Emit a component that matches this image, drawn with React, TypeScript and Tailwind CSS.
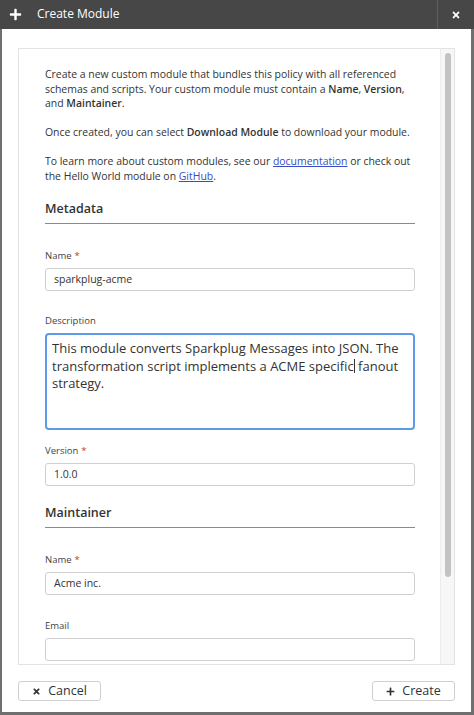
import { FaPlus, FaTimes } from 'react-icons/fa'

function Label({ text, required }: { text: string; required?: boolean }) {
  return (
    <div className="text-[9.5px] leading-[14px] text-[#444]">
      {text}
      {required && <span className="ml-[3px] text-[#c0392b]">*</span>}
    </div>
  )
}

function TextInput({ value }: { value: string }) {
  return (
    <div className="mt-[5px] flex h-[23px] items-center rounded-[3px] border border-[#cfcfcf] bg-white px-[8px] text-[10.5px] text-[#333]">
      {value}
    </div>
  )
}

function Section({ title }: { title: string }) {
  return (
    <div className="border-b border-[#8a8a8a] pb-[5px] text-[12.5px] font-semibold leading-[19px] text-[#333]">{title}</div>
  )
}

export default function App() {
  return (
    <div className="flex h-[715px] w-[474px] flex-col bg-[#6f6f6f] pb-[3px] pl-[2px] pr-[3px] font-['Open_Sans',sans-serif]">
      {/* title bar */}
      <div className="-ml-[2px] -mr-[3px] flex h-[29px] shrink-0 items-center bg-[#474747] text-white">
        <div className="flex w-[37px] justify-center pr-[8px] pl-[1px]">
          <FaPlus className="h-[13px] w-[13px]" />
        </div>
        <div className="flex-1 pb-[2px] text-[12px]">Create Module</div>
        <div className="flex h-full w-[37px] items-center justify-center border-l border-[#5e5e5e]">
          <FaTimes className="h-[10px] w-[10px]" />
        </div>
      </div>

      <div className="flex flex-1 flex-col bg-white px-[16px] pt-[19px] pb-[11px]">
        {/* scroll box */}
        <div className="flex h-[617px] border border-[#e3e3e3]">
          <div className="flex-1 overflow-hidden pt-[18px] pl-[26px] pr-[25px]">
            <div className="text-[10.45px] leading-[14.5px] text-[#333]">
              <p>
                Create a new custom module that bundles this policy with all referenced schemas and scripts. Your custom
                module must contain a <b className="font-semibold">Name</b>, <b className="font-semibold">Version</b>,
                and <b className="font-semibold">Maintainer</b>.
              </p>
              <p className="mt-[14.5px]">
                Once created, you can select <b className="font-semibold">Download Module</b> to download your module.
              </p>
              <p className="mt-[14.5px]">
                To learn more about custom modules, see our{' '}
                <span className="text-[#3a4bc6] underline">documentation</span> or check out the Hello World module on{' '}
                <span className="text-[#3a4bc6] underline">GitHub</span>.
              </p>
            </div>

            <div className="mt-[16px]">
              <Section title="Metadata" />
            </div>

            <div className="mt-[25px]">
              <Label text="Name" required />
              <TextInput value="sparkplug-acme" />
            </div>

            <div className="mt-[23px]">
              <Label text="Description" />
              <div className="mt-[5px] h-[97px] rounded-[4px] border-2 border-[#5d9be8] px-[5px] pt-[5px] text-[13px] leading-[17px] text-[#333]">
                This module converts Sparkplug Messages into JSON. The transformation script implements a ACME specific
                <span className="inline-block h-[14px] w-px translate-y-[2px] bg-[#333]" /> fanout strategy.
              </div>
            </div>

            <div className="mt-[14px]">
              <Label text="Version" required />
              <TextInput value="1.0.0" />
            </div>

            <div className="mt-[17px]">
              <Section title="Maintainer" />
            </div>

            <div className="mt-[25px]">
              <Label text="Name" required />
              <TextInput value="Acme inc." />
            </div>

            <div className="mt-[24px]">
              <Label text="Email" />
              <TextInput value="" />
            </div>
          </div>

          {/* scrollbar */}
          <div className="flex w-[14px] shrink-0 justify-center border-l border-[#ececec] bg-[#f7f7f7] pt-[4px]">
            <div className="h-[524px] w-[6px] rounded-full bg-[#c3c3c3]" />
          </div>
        </div>

        {/* footer */}
        <div className="mt-[16px] flex justify-between">
          <button
            type="button"
            className="flex h-[20px] w-[83px] items-center justify-center gap-[7px] rounded-[3px] border border-[#cfcfcf] bg-white text-[12.5px] text-[#333]"
          >
            <FaTimes className="h-[9px] w-[9px]" />
            Cancel
          </button>
          <button
            type="button"
            className="flex h-[20px] w-[83px] items-center justify-center gap-[7px] rounded-[3px] border border-[#cfcfcf] bg-white text-[12.5px] text-[#333]"
          >
            <FaPlus className="h-[9px] w-[9px]" />
            Create
          </button>
        </div>
      </div>
    </div>
  )
}
